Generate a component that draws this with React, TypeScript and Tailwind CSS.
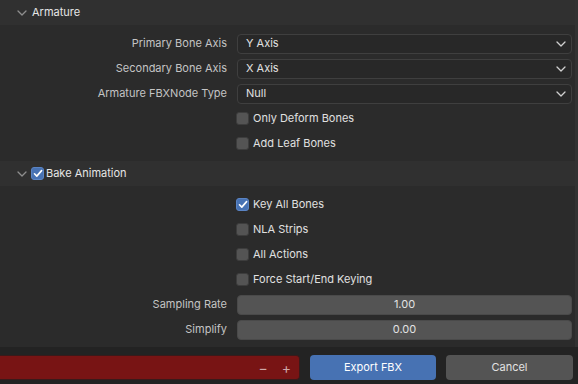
import React from 'react';

const Chevron = ({ className = '' }: { className?: string }) => (
  <svg className={className} width="10" height="6" viewBox="0 0 10 6" fill="none">
    <path d="M1 1l4 4 4-4" stroke="currentColor" strokeWidth="1.3" strokeLinecap="round" strokeLinejoin="round" />
  </svg>
);

const Check = ({ checked }: { checked?: boolean }) => (
  <div
    className={
      checked
        ? 'flex items-center justify-center w-[13px] h-[13px] rounded-[3px] bg-[#4772b3] border border-[#5a84c4] shrink-0'
        : 'w-[13px] h-[13px] rounded-[3px] bg-[#545454] border border-[#3d3d3d] shrink-0'
    }
  >
    {checked && (
      <svg width="10" height="9" viewBox="0 0 10 9" fill="none">
        <path d="M1.5 4.8l2.3 2.3L8.6 1.6" stroke="#fff" strokeWidth="1.6" strokeLinecap="round" strokeLinejoin="round" />
      </svg>
    )}
  </div>
);

const Label = ({ children }: { children?: React.ReactNode }) => (
  <div className="w-[227px] text-right text-[#c4c4c4] shrink-0">{children}</div>
);

const SelectRow = ({ label, value }: { label: string; value: string }) => (
  <div className="flex items-center h-[25px]">
    <Label>{label}</Label>
    <div className="ml-[10px] w-[335px] h-[20px] flex items-center justify-between pl-[8px] pr-[5px] rounded-[4px] bg-[#282828] border border-[#3f3f3f] text-[#e2e2e2]">
      <span>{value}</span>
      <Chevron className="text-[#d0d0d0]" />
    </div>
  </div>
);

const CheckRow = ({ label, checked }: { label: string; checked?: boolean }) => (
  <div className="flex items-center h-[25px]">
    <Label />
    <div className="ml-[9px] flex items-center gap-[4px] text-[#e0e0e0]">
      <Check checked={checked} />
      <span>{label}</span>
    </div>
  </div>
);

const NumberRow = ({ label, value }: { label: string; value: string }) => (
  <div className="flex items-center h-[25px]">
    <Label>{label}</Label>
    <div className="ml-[10px] w-[335px] h-[20px] flex items-center justify-center rounded-[4px] bg-[#545454] border border-[#4a4a4a] text-[#e2e2e2]">
      {value}
    </div>
  </div>
);

const App = () => {
  return (
    <div
      className="w-[578px] h-[384px] bg-[#2b2b2b] text-[11px] overflow-hidden flex flex-col relative"
      style={{ fontFamily: 'Inter, "DejaVu Sans", sans-serif' }}
    >
      <div className="h-[25px] bg-[#303030] flex items-center pl-[17px] gap-[5px] text-[#e6e6e6] shrink-0">
        <Chevron className="text-[#8e8e8e]" />
        <span>Armature</span>
      </div>

      <div className="pt-[6px]">
        <SelectRow label="Primary Bone Axis" value="Y Axis" />
        <SelectRow label="Secondary Bone Axis" value="X Axis" />
        <SelectRow label="Armature FBXNode Type" value="Null" />
        <CheckRow label="Only Deform Bones" />
        <CheckRow label="Add Leaf Bones" />
      </div>

      <div className="mt-[5px] h-[25px] bg-[#303030] flex items-center pl-[17px] text-[#e6e6e6] shrink-0">
        <Chevron className="text-[#8e8e8e]" />
        <div className="ml-[4px] mr-[2px]">
          <Check checked />
        </div>
        <span>Bake Animation</span>
      </div>

      <div className="pt-[6px]">
        <CheckRow label="Key All Bones" checked />
        <CheckRow label="NLA Strips" />
        <CheckRow label="All Actions" />
        <CheckRow label="Force Start/End Keying" />
        <NumberRow label="Sampling Rate" value="1.00" />
        <NumberRow label="Simplify" value="0.00" />
      </div>

      <div className="mt-[5px] flex-1 bg-[#232323] pt-[8px] flex items-start">
        <div className="w-[300px] h-[25px] bg-[#781414] rounded-r-[4px] border border-l-0 border-[#3a1a1a] flex items-center justify-end pr-[8px] gap-[14px] text-[#cfa8a8]">
          <span className="text-[14px] leading-none">−</span>
          <span className="text-[14px] leading-none">+</span>
        </div>
        <div className="ml-[10px] w-[126px] h-[25px] rounded-[4px] bg-[#4772b3] flex items-center justify-center text-white">
          Export FBX
        </div>
        <div className="ml-[10px] w-[127px] h-[25px] rounded-[4px] bg-[#545454] flex items-center justify-center text-[#e2e2e2]">
          Cancel
        </div>
      </div>

      <div className="absolute top-0 right-0 w-[3px] h-[347px] bg-[#323232]" />
    </div>
  );
};

export default App;
